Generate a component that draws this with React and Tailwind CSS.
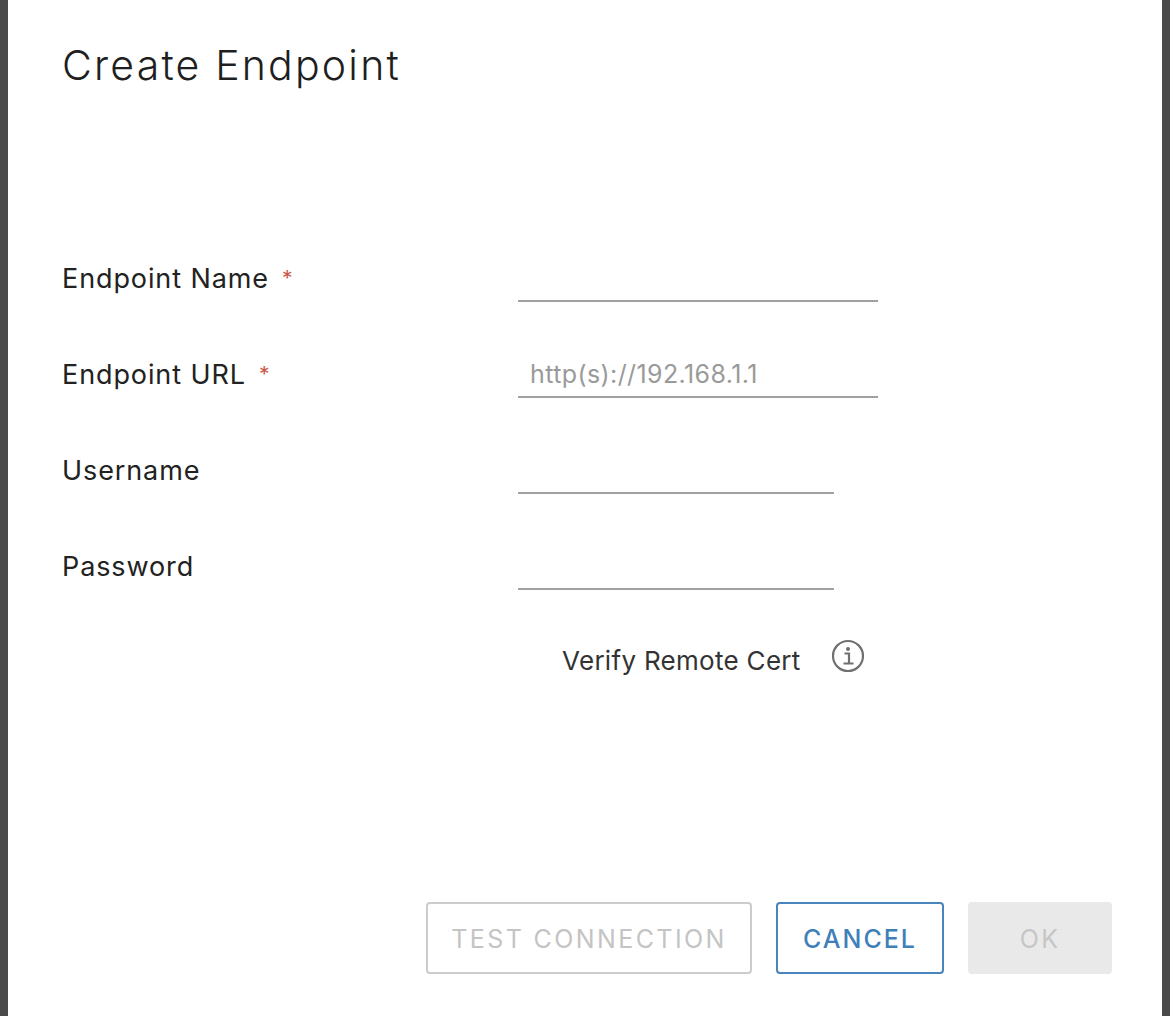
import React from 'react';

const fontStack = "font-['Inter','Liberation_Sans',sans-serif]";

function InfoIcon() {
  return (
    <svg width="34" height="34" viewBox="0 0 34 34" fill="none" className="text-[#707070]">
      <circle cx="17" cy="17" r="15" stroke="currentColor" strokeWidth="2.2" />
      <circle cx="17" cy="10" r="2" fill="currentColor" />
      <path d="M13.5 14.5h4.5v9.5M12.5 24.5h10" stroke="currentColor" strokeWidth="2.2" />
    </svg>
  );
}

function Field({ label, required, width, placeholder }) {
  return (
    <div className="flex h-[96px] items-start">
      <label className="flex w-[456px] items-center pt-[17px] text-[27px] leading-[32px] tracking-[0.9px] text-[#222222]">
        {label}
        {required && <span className="ml-[13px] text-[21px] text-[#c9584c]">*</span>}
      </label>
      <div className={`${width} mt-[12px] h-[44px] border-b-2 border-[#a0a0a0] pl-[12px] pt-[4px] text-[25px] leading-[32px] tracking-[0.4px] text-[#9a9a9a]`}>
        {placeholder}
      </div>
    </div>
  );
}

export default function App() {
  return (
    <div className={`${fontStack} h-[1016px] w-[1170px] overflow-hidden border-x-8 border-[#4a4a4a] bg-white`}>
      <div className="flex h-full flex-col pl-[54px] pr-[50px]">
        <h1 className="pt-[36px] text-[41px] font-light leading-[58px] tracking-[2.2px] text-[#1f1f1f]">Create Endpoint</h1>

        <form className="mt-[152px]">
          <Field label="Endpoint Name" required width="w-[360px]" />
          <Field label="Endpoint URL" required width="w-[360px]" placeholder="http(s)://192.168.1.1" />
          <Field label="Username" width="w-[316px]" />
          <Field label="Password" width="w-[316px]" />
        </form>

        <div className="mt-[12px] flex items-center pl-[500px]">
          <span className="pt-[3px] text-[26px] leading-[32px] tracking-[0.3px] text-[#333333]">Verify Remote Cert</span>
          <span className="-mt-[7px] ml-[30px]"><InfoIcon /></span>
        </div>

        <div className="mt-auto mb-[42px] flex justify-end gap-[24px]">
          <button className="h-[72px] w-[326px] rounded-[4px] border-2 border-[#cccccc] pt-[4px] text-[25px] tracking-[2.4px] text-[#c4c4c4]">TEST CONNECTION</button>
          <button className="h-[72px] w-[168px] rounded-[4px] border-2 border-[#4a84bd] pt-[4px] text-[25px] font-medium tracking-[2px] text-[#3f7fba]">CANCEL</button>
          <button className="h-[72px] w-[144px] rounded-[4px] bg-[#e9e9e9] pt-[4px] text-[25px] tracking-[2.4px] text-[#c6c6c6]">OK</button>
        </div>
      </div>
    </div>
  );
}
